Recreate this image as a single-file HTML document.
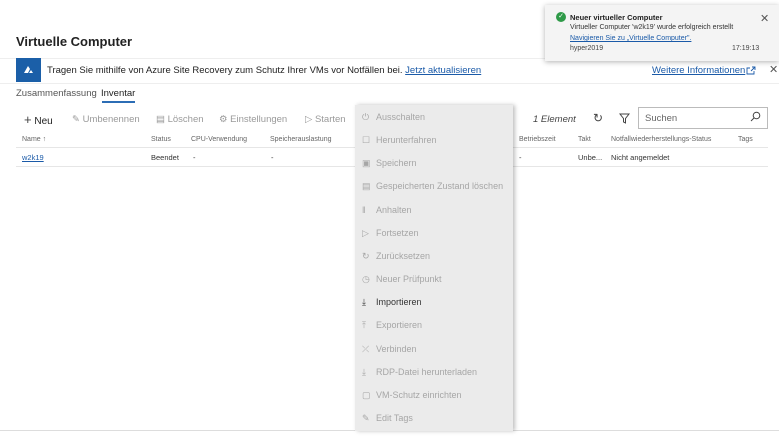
<!DOCTYPE html>
<html><head><meta charset="utf-8"><style>
*{margin:0;padding:0;box-sizing:border-box}
body{width:779px;height:436px;background:#fff;font-family:"Liberation Sans",sans-serif;color:#333;position:relative;overflow:hidden}
.a{position:absolute;white-space:nowrap}
.s{font-size:7px;color:#666}
.m{font-size:9px;color:#a6a6a6}
.m i{display:inline-block;width:14px;font-style:normal}
.tb{font-size:9.5px;color:#9a9a9a}
</style></head><body>
<div class="a" style="left:16px;top:34px;font-size:13px;font-weight:bold;color:#222">Virtuelle Computer</div>
<div class="a" style="left:0;top:58px;width:779px;height:26px;border-top:1px solid #eee;border-bottom:1px solid #eee"></div>
<div class="a" style="left:16px;top:58px;width:25px;height:24px;background:#1b5fa8"></div>
<svg class="a" style="left:23px;top:65px" width="11" height="9"><path d="M1 8 L5 1 L7 4 L5 8 Z M6 8 L8 5 L10 8 Z" fill="#fff"/></svg>
<div class="a" style="left:47px;top:65px;font-size:9.5px;color:#222">Tragen Sie mithilfe von Azure Site Recovery zum Schutz Ihrer VMs vor Notfällen bei. <span style="color:#1a5aa8;text-decoration:underline">Jetzt aktualisieren</span></div>
<div class="a" style="left:652px;top:65px;font-size:9.5px;color:#1a5aa8;text-decoration:underline">Weitere Informationen</div>
<svg class="a" style="left:746px;top:66px" width="10" height="9"><path d="M6 1 H9 V4 M9 1 L5 5 M4 2 H1 V8 H8 V5" fill="none" stroke="#1a5aa8" stroke-width="0.9"/></svg>
<div class="a" style="left:769px;top:63px;font-size:11px;color:#555">✕</div>
<div class="a" style="left:16px;top:88px;font-size:9.5px;color:#555">Zusammenfassung</div>
<div class="a" style="left:101px;top:88px;font-size:9.5px;color:#222">Inventar</div>
<div class="a" style="left:102px;top:101px;width:33px;height:2px;background:#2c6db5"></div>
<div class="a" style="left:24px;top:112px;font-size:10px;color:#222"><span style="font-size:13px;color:#444">+</span> Neu</div>
<div class="a tb" style="left:72px;top:114px">✎ Umbenennen</div>
<div class="a tb" style="left:156px;top:114px">▤ Löschen</div>
<div class="a tb" style="left:219px;top:114px">⚙ Einstellungen</div>
<div class="a tb" style="left:305px;top:114px">▷ Starten</div>
<div class="a" style="left:533px;top:114px;font-size:9.5px;color:#444;font-style:italic">1 Element</div>
<div class="a" style="left:593px;top:111px;font-size:12px;color:#444">↻</div>
<svg class="a" style="left:619px;top:113px" width="11" height="11"><path d="M1 1 H10 L6.5 5.5 V10 L4.5 9 V5.5 Z" fill="none" stroke="#444"/></svg>
<div class="a" style="left:638px;top:107px;width:130px;height:22px;border:1px solid #bbb"></div>
<div class="a" style="left:645px;top:113px;font-size:9.5px;color:#666">Suchen</div>
<svg class="a" style="left:750px;top:111px" width="11" height="11"><circle cx="6.5" cy="4.5" r="3.3" fill="none" stroke="#444"/><path d="M4 7 L1 10" stroke="#444"/></svg>
<div class="a s" style="left:22px;top:136px">Name ↑</div>
<div class="a s" style="left:151px;top:136px">Status</div>
<div class="a s" style="left:191px;top:136px">CPU-Verwendung</div>
<div class="a s" style="left:270px;top:136px">Speicherauslastung</div>
<div class="a s" style="left:519px;top:136px">Betriebszeit</div>
<div class="a s" style="left:578px;top:136px">Takt</div>
<div class="a s" style="left:611px;top:136px">Notfallwiederherstellungs-Status</div>
<div class="a s" style="left:738px;top:136px">Tags</div>
<div class="a" style="left:16px;top:147px;width:752px;height:1px;background:#e6e6e6"></div>
<div class="a" style="left:16px;top:166px;width:752px;height:1px;background:#e6e6e6"></div>
<div class="a" style="left:22px;top:153px;font-size:7.5px;color:#1a5aa8;text-decoration:underline">w2k19</div>
<div class="a" style="left:151px;top:153px;font-size:7.5px;color:#333">Beendet</div>
<div class="a" style="left:193px;top:153px;font-size:7.5px">-</div>
<div class="a" style="left:271px;top:153px;font-size:7.5px">-</div>
<div class="a" style="left:519px;top:153px;font-size:7.5px">-</div>
<div class="a" style="left:578px;top:153px;font-size:7.5px;color:#333">Unbe...</div>
<div class="a" style="left:611px;top:153px;font-size:7.5px;color:#333">Nicht angemeldet</div>
<div class="a" style="left:0;top:430px;width:779px;height:1px;background:#ddd"></div>
<div class="a" style="left:355px;top:105px;width:158px;height:326px;background:#ebebeb;box-shadow:2px 0 4px rgba(0,0,0,.25)"></div>
<div class="a m" style="left:362px;top:106px;line-height:23.15px">
<div><i>⏻</i>Ausschalten</div><div><i>☐</i>Herunterfahren</div><div><i>▣</i>Speichern</div><div><i>▤</i>Gespeicherten Zustand löschen</div><div><i>ǁ</i>Anhalten</div><div><i>▷</i>Fortsetzen</div><div><i>↻</i>Zurücksetzen</div><div><i>◷</i>Neuer Prüfpunkt</div><div style="color:#333"><i>⤓</i>Importieren</div><div><i>⤒</i>Exportieren</div><div><i>⤫</i>Verbinden</div><div><i>⤓</i>RDP-Datei herunterladen</div><div><i>▢</i>VM-Schutz einrichten</div><div><i>✎</i>Edit Tags</div></div>
<div class="a" style="left:545px;top:5px;width:234px;height:56px;background:#f4f4f4;box-shadow:0 1px 5px rgba(0,0,0,.3)"></div>
<div class="a" style="left:556px;top:12px;width:10px;height:10px;border-radius:50%;background:#2e9a48;color:#fff;font-size:7px;text-align:center;line-height:10px">✓</div>
<div class="a" style="left:570px;top:13px;font-size:7.5px;font-weight:bold;color:#222">Neuer virtueller Computer</div>
<div class="a" style="left:570px;top:24px;font-size:7px;color:#333">Virtueller Computer 'w2k19' wurde erfolgreich erstellt</div>
<div class="a" style="left:570px;top:35px;font-size:7px;color:#1a5aa8;text-decoration:underline">Navigieren Sie zu „Virtuelle Computer".</div>
<div class="a" style="left:570px;top:45px;font-size:7px;color:#444">hyper2019</div>
<div class="a" style="left:732px;top:45px;font-size:7px;color:#444">17:19:13</div>
<div class="a" style="left:760px;top:12px;font-size:11px;color:#555">✕</div>
</body></html>
